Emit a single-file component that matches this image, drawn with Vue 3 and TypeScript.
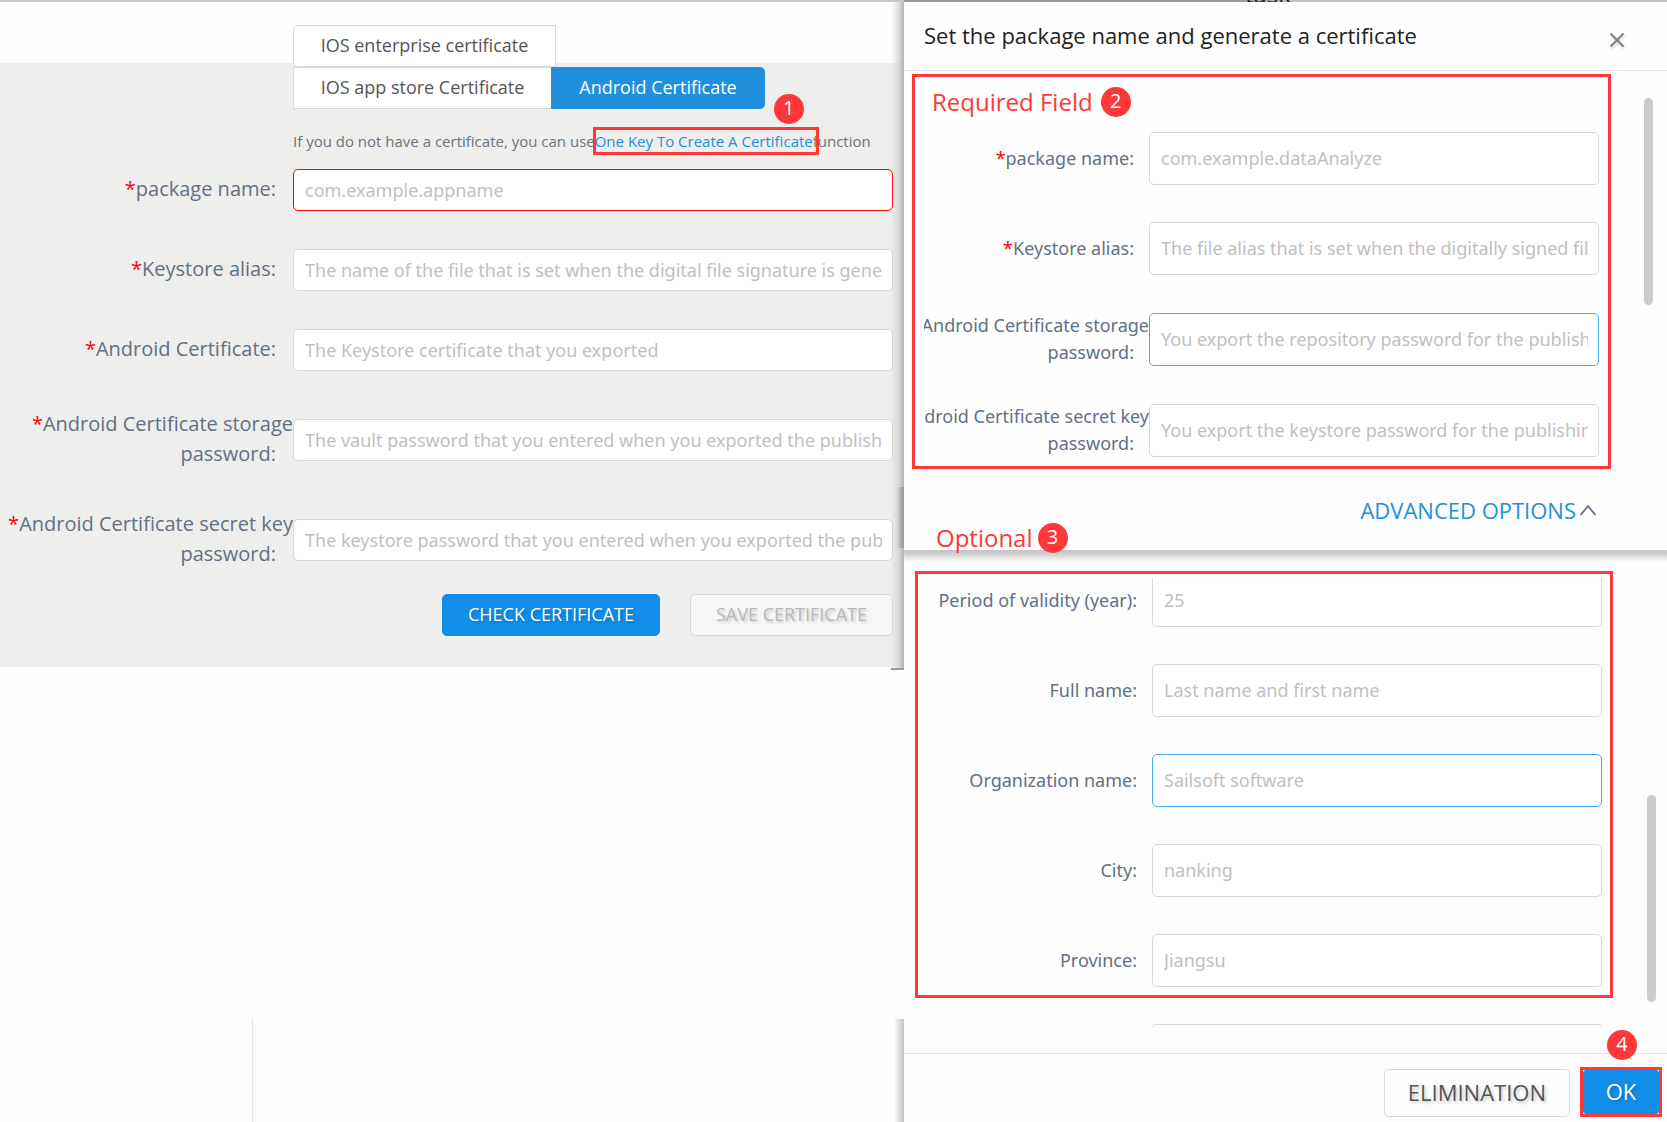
<script setup lang="ts">
import { ref } from 'vue'

interface Field {
  id: string
  lines: string[]
  placeholder: string
  required?: boolean
  state?: 'error' | 'active'
}

const certificateFields: Field[] = [
  { id: 'app-package', lines: ['package name:'], placeholder: 'com.example.appname', required: true, state: 'error' },
  { id: 'app-alias', lines: ['Keystore alias:'], placeholder: 'The name of the file that is set when the digital file signature is generated', required: true },
  { id: 'app-cert', lines: ['Android Certificate:'], placeholder: 'The Keystore certificate that you exported', required: true },
  { id: 'app-storage', lines: ['Android Certificate storage', 'password:'], placeholder: 'The vault password that you entered when you exported the publishing certificate', required: true },
  { id: 'app-secret', lines: ['Android Certificate secret key', 'password:'], placeholder: 'The keystore password that you entered when you exported the publishing certificate', required: true },
]

const requiredFields: Field[] = [
  { id: 'new-package', lines: ['package name:'], placeholder: 'com.example.dataAnalyze', required: true },
  { id: 'new-alias', lines: ['Keystore alias:'], placeholder: 'The file alias that is set when the digitally signed file is generated', required: true },
  { id: 'new-storage', lines: ['Android Certificate storage', 'password:'], placeholder: 'You export the repository password for the publishing certificate', required: true, state: 'active' },
  { id: 'new-secret', lines: ['Android Certificate secret key', 'password:'], placeholder: 'You export the keystore password for the publishing certificate', required: true },
]

const optionalFields: Field[] = [
  { id: 'new-validity', lines: ['Period of validity (year):'], placeholder: '25' },
  { id: 'new-name', lines: ['Full name:'], placeholder: 'Last name and first name' },
  { id: 'new-org', lines: ['Organization name:'], placeholder: 'Sailsoft software', state: 'active' },
  { id: 'new-city', lines: ['City:'], placeholder: 'nanking' },
  { id: 'new-province', lines: ['Province:'], placeholder: 'Jiangsu' },
]

const values = ref<Record<string, string>>({})
</script>

<template>
  <div class="page">
    <main class="left">
      <div class="strip"></div>
      <section class="certificate">
        <div class="tabs">
          <button type="button" class="tab first">IOS enterprise certificate</button>
          <div class="tab-line">
            <button type="button" class="tab second">IOS app store Certificate</button>
            <button type="button" class="tab selected">Android Certificate</button>
          </div>
        </div>
        <p class="hint">If you do not have a certificate, you can use<a href="#" class="link">One Key To Create A Certificate<span class="link-frame"></span><span class="badge one">1</span></a>function</p>
        <div class="rows">
          <div v-for="f in certificateFields" :key="f.id" class="row">
            <label :for="f.id" class="label">
              <span v-for="(line, i) in f.lines" :key="line" class="line" :class="{ last: i === f.lines.length - 1 }"><i v-if="i === 0 && f.required" class="star">*</i>{{ line }}</span>
            </label>
            <input :id="f.id" v-model="values[f.id]" type="text" class="field" :class="f.state" :placeholder="f.placeholder" />
          </div>
        </div>
        <div class="actions">
          <button type="button" class="btn primary">CHECK CERTIFICATE</button>
          <button type="button" class="btn" disabled>SAVE CERTIFICATE</button>
        </div>
        <div class="edge"></div>
        <div class="edge deep"></div>
      </section>
      <div class="blank"></div>
      <div class="below">
        <div class="below-side"></div>
        <div class="below-main"></div>
      </div>
    </main>

    <aside class="right">
      <div class="strip dark"><span class="behind">task</span></div>
      <section class="dialog">
        <header class="head">
          <h1 class="title">Set the package name and generate a certificate</h1>
          <button type="button" class="close" aria-label="Close">
            <svg width="16" height="16" viewBox="0 0 16 16"><path d="M1.5 1.5 14.5 14.5M14.5 1.5 1.5 14.5" stroke="#808080" stroke-width="2" fill="none" /></svg>
          </button>
        </header>
        <div class="scroll">
          <div class="group">
            <h2 class="note">Required Field<span class="badge">2</span></h2>
            <div class="rows clip">
              <div v-for="f in requiredFields" :key="f.id" class="row">
                <label :for="f.id" class="label">
                  <span v-for="(line, i) in f.lines" :key="line" class="line" :class="{ last: i === f.lines.length - 1 }"><i v-if="i === 0 && f.required" class="star">*</i>{{ line }}</span>
                </label>
                <input :id="f.id" v-model="values[f.id]" type="text" class="field" :class="f.state" :placeholder="f.placeholder" />
              </div>
            </div>
          </div>
          <div class="thumb"></div>
        </div>
        <div class="advanced">
          <button type="button" class="toggle">ADVANCED OPTIONS<svg width="18" height="14" viewBox="0 0 18 14"><path d="M1.5 12 9 3.2 16.500 12" stroke="#637083" stroke-width="1.800" fill="none" /></svg></button>
        </div>
        <h2 class="note optional">Optional<span class="badge">3</span></h2>
      </section>

      <section class="more">
        <div class="scroll">
          <div class="group">
            <div class="rows clip">
              <div v-for="f in optionalFields" :key="f.id" class="row">
                <label :for="f.id" class="label">
                  <span v-for="line in f.lines" :key="line" class="line last">{{ line }}</span>
                </label>
                <input :id="f.id" v-model="values[f.id]" type="text" class="field" :class="f.state" :placeholder="f.placeholder" />
              </div>
            </div>
          </div>
          <div class="thumb low"></div>
        </div>
        <div class="peek"><div class="peek-field"></div></div>
        <footer class="foot">
          <button type="button" class="btn">ELIMINATION</button>
          <div class="ok-frame">
            <button type="button" class="btn primary ok">OK</button>
            <span class="badge four">4</span>
          </div>
        </footer>
      </section>
    </aside>
  </div>
</template>

<style>
body {
  margin: 0;
  background: #fdfdfd;
}
</style>

<style scoped>
.page {
  display: grid;
  grid-template-columns: 904fr 763fr;
  min-height: 100vh;
  font-family: 'Open Sans', 'Noto Sans', sans-serif;
  font-size: 18px;
  color: #637083;
  overflow: hidden;
}

.page *,
.page *::before {
  box-sizing: border-box;
}

button,
input {
  font-family: inherit;
  font-size: 18px;
}

.left {
  display: flex;
  flex-direction: column;
  min-width: 0;
}

.strip {
  height: 2px;
  background: #c8c8c8;
  flex: none;
}

.certificate {
  position: relative;
  padding: 23px 11px 31px 0;
  background: linear-gradient(#fefefe 61px, #eeeeec 61px);
}

.tabs {
  display: flex;
  flex-direction: column;
  align-items: flex-start;
  padding-left: 293px;
}

.tab-line {
  display: flex;
}

.tab {
  height: 42px;
  padding: 0 20px 2px;
  border: 1px solid #d8d8d8;
  background: #fff;
  color: #555;
  white-space: nowrap;
}

.tab.first {
  width: 263px;
  border-radius: 5px 0 0 5px;
}

.tab.second {
  width: 258px;
  border-right: 0;
}

.tab.selected {
  width: 214px;
  border-color: #2190dc;
  border-radius: 0 5px 5px 0;
  background: #2190dc;
  color: #fff;
}

.hint {
  margin: 19px 0 14px 293px;
  font-size: 15px;
  line-height: 27px;
  color: #6b747d;
  white-space: nowrap;
}

.link {
  position: relative;
  color: #2190dc;
  text-decoration: none;
}

.link-frame {
  position: absolute;
  inset: -4px -6px -4px -2px;
  border: 3px solid #fe3838;
}

.badge {
  display: inline-flex;
  align-items: center;
  justify-content: center;
  width: 30px;
  height: 30px;
  padding-bottom: 2px;
  border-radius: 50%;
  background: #fe3838;
  color: #fff;
  font-size: 20px;
  line-height: 28px;
}

.badge.one {
  position: absolute;
  right: 9px;
  bottom: 27px;
}

.rows {
  display: flex;
  flex-direction: column;
  gap: 38px;
}

.row {
  display: flex;
  align-items: center;
}

.label {
  display: flex;
  flex-direction: column;
  align-items: flex-end;
  flex: none;
  width: 293px;
  padding-bottom: 2px;
  font-size: 20px;
  line-height: 30px;
  white-space: nowrap;
}

.line.last {
  padding-right: 17px;
}

.star {
  color: #f00;
  font-style: normal;
}

.field {
  flex: 1;
  min-width: 0;
  height: 42px;
  padding: 0 10px 1px 11px;
  border: 1px solid #d8d8d8;
  border-radius: 5px;
  background: #fff;
  color: #333;
  font-family: 'Noto Sans', sans-serif;
  outline: 0;
}

.field::placeholder {
  color: #c0c0c0;
  opacity: 1;
}

.field.error {
  border-color: #f00;
}

.field.active {
  border-color: #4aa8ee;
}

.actions {
  display: flex;
  justify-content: flex-end;
  gap: 30px;
  margin-top: 23px;
}

.btn {
  height: 42px;
  padding: 0 25px 2px;
  border: 1px solid #d8d8d8;
  border-radius: 5px;
  background: #fdfdfd;
  color: #555;
  text-shadow: 2px 2px 3px rgba(0, 0, 0, 0.2);
}

.btn:disabled {
  background: #f7f7f7;
  color: #b8b8b8;
}

.btn.primary {
  border-color: #128eea;
  background: #128eea;
  color: #fff;
}

.edge {
  position: absolute;
  top: 0;
  right: 0;
  bottom: -3px;
  width: 13px;
  border-bottom: 2px solid #999;
  background: linear-gradient(90deg, rgba(180, 180, 180, 0), rgba(190, 190, 190, 0.5) 60%, #b2b2b2);
}

.edge.deep {
  top: 485px;
  bottom: 119px;
  width: 7px;
  border: 0;
  background: linear-gradient(90deg, rgba(150, 150, 150, 0), #999);
}

.blank {
  height: 352px;
}

.below {
  display: flex;
  flex: 1;
}

.below-side {
  width: 28%;
  border-right: 1px solid #e4e4e4;
}

.below-main {
  flex: 1;
  background: linear-gradient(270deg, #c4c4c4, rgba(253, 253, 253, 0) 10px);
}

.right {
  display: flex;
  flex-direction: column;
  min-width: 0;
}

.strip.dark {
  display: flex;
  align-items: flex-end;
  padding-left: 341px;
  overflow: hidden;
  background: linear-gradient(90deg, #999 44%, #c4c4c4 52%);
}

.behind {
  font-size: 24px;
  line-height: 16px;
  color: #222;
}

.dialog {
  position: relative;
  background: #fefefe;
  box-shadow: 0 4px 6px 3px rgba(0, 0, 0, 0.22);
  clip-path: inset(0 0 -12px 0);
}

.head {
  display: flex;
  align-items: center;
  justify-content: space-between;
  height: 69px;
  padding: 0 42px 0 20px;
  border-bottom: 1px solid #e4e4e4;
}

.title {
  margin: 0 0 2px;
  font-size: 22px;
  font-weight: 400;
  line-height: 30px;
  color: #222;
  white-space: nowrap;
}

.close {
  display: flex;
  margin-top: 8px;
  padding: 0;
  border: 0;
  background: none;
  filter: drop-shadow(1px 2px 1px rgba(0, 0, 0, 0.15));
}

.scroll {
  display: flex;
  align-items: flex-start;
  justify-content: space-between;
  padding: 3px 14px 0 8px;
}

.group {
  flex: 1;
  min-width: 0;
  border: 3px solid #fe3838;
}

.note {
  display: flex;
  align-items: center;
  gap: 8px;
  margin: 0 0 5px 17px;
  font-size: 24px;
  font-weight: 400;
  line-height: 50px;
  color: #fe3838;
}

.clip {
  gap: 37px;
  margin-left: 9px;
  padding: 0 9px 9px 0;
  overflow: hidden;
}

.right .label {
  width: 225px;
  padding-bottom: 0;
  font-family: 'Noto Sans', sans-serif;
  font-size: 18px;
  line-height: 27px;
}

.right .line.last {
  padding-right: 15px;
}

.right .field {
  height: 53px;
}

.thumb {
  flex: none;
  width: 9px;
  height: 207px;
  margin: 24px 0 0 33px;
  border-radius: 5px;
  background: #cbcbc9;
}

.advanced {
  display: flex;
  justify-content: flex-end;
  padding: 23px 70px 22px 0;
}

.toggle {
  display: flex;
  align-items: center;
  gap: 3px;
  padding: 0;
  border: 0;
  background: none;
  color: #2190dc;
  font-size: 22px;
  line-height: 36px;
}

.note.optional {
  position: absolute;
  bottom: -3px;
  left: 32px;
  gap: 5px;
  margin: 0;
  line-height: 30px;
}

.more {
  display: flex;
  flex-direction: column;
}

.more .scroll {
  height: 451px;
  padding: 21px 11px 0 11px;
}

.more .clip {
  margin-top: 4px;
  padding: 0 8px 8px 0;
}

.more .row:first-child {
  align-items: flex-start;
}

.more .row:first-child .field {
  height: 49px;
  padding-bottom: 4px;
  border-top: 0;
  border-radius: 0 0 5px 5px;
}

.more .row:first-child .label {
  padding-top: 9px;
}

.thumb.low {
  margin-top: 224px;
  margin-left: 34px;
}

.peek {
  height: 29px;
  margin: 23px 65px 0 248px;
}

.peek-field {
  height: 4px;
  border-top: 1px solid #d8d8d8;
  border-radius: 5px 5px 0 0;
}

.foot {
  display: flex;
  justify-content: flex-end;
  align-items: flex-start;
  gap: 10px;
  padding: 13px 5px 6px 0;
  border-top: 1px solid #e4e4e4;
}

.foot .btn {
  height: 48px;
  margin-top: 2px;
  padding: 0 23px 2px;
  font-size: 22px;
}

.ok-frame {
  position: relative;
  border: 3px solid #fe3838;
}

.foot .btn.ok {
  display: block;
  width: 76px;
  height: 44px;
  margin: 0;
  padding: 0 0 2px;
  border-radius: 3px;
}

.badge.four {
  position: absolute;
  top: -40px;
  left: 24px;
}
</style>
